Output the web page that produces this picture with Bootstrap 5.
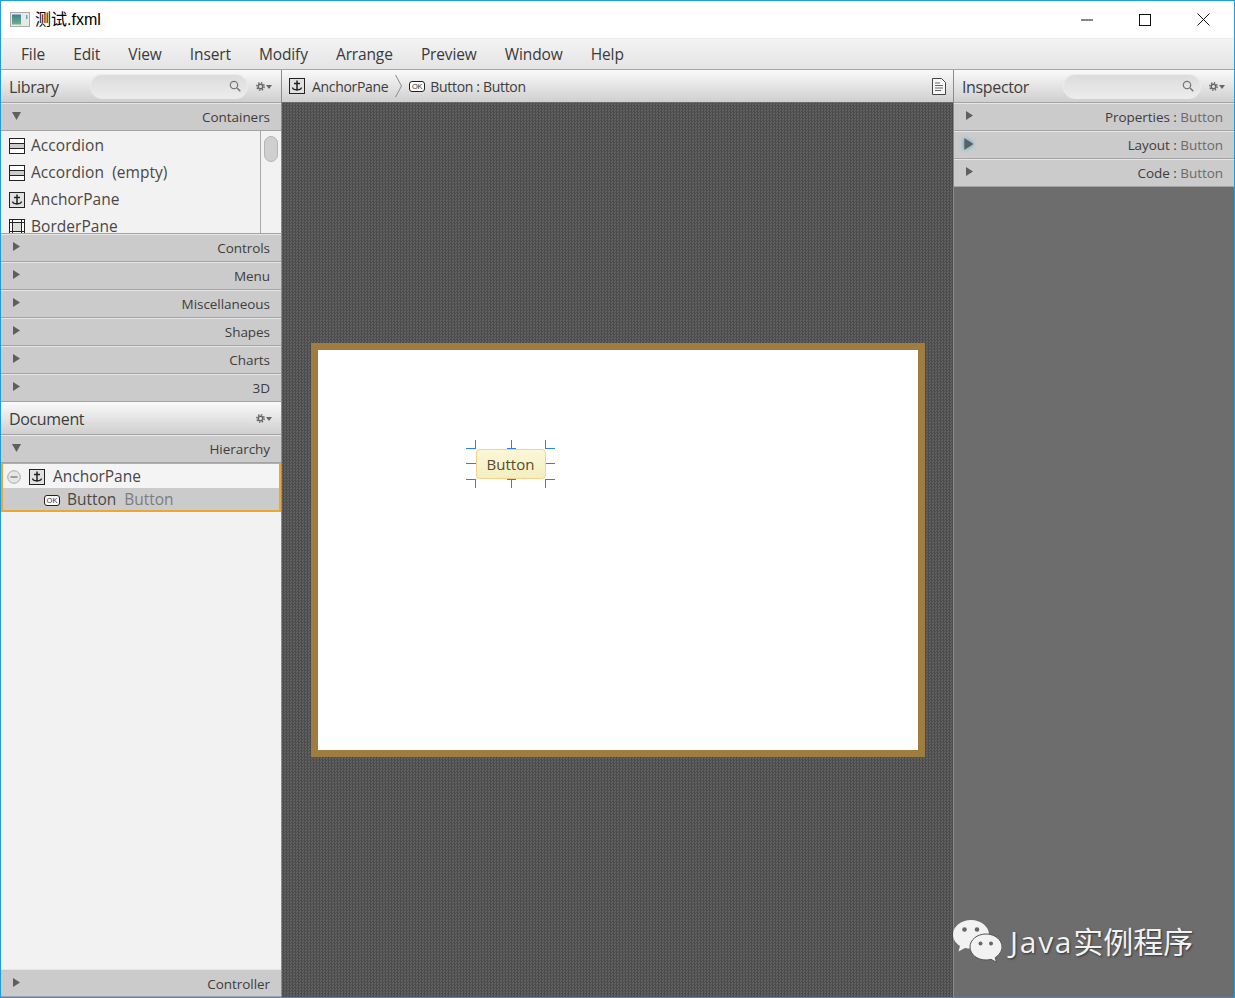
<!DOCTYPE html>
<html lang="en">
<head>
<meta charset="utf-8">
<title>测试.fxml</title>
<link href="https://cdn.jsdelivr.net/npm/bootstrap@5.3.0/dist/css/bootstrap.min.css" rel="stylesheet">
<style>
html,body{height:100%;margin:0;overflow:hidden}
body{font-family:"Open Sans","Noto Sans","Noto Sans CJK SC",sans-serif;color:#333;background:#fff}
.win{width:1235px;height:998px;border:1px solid #1c9ce2;display:flex;flex-direction:column}
.titlebar{height:37px;flex:none;background:#fff;color:#000;font-size:15px}
.titlebar .ttl{font-family:"Liberation Sans","Noto Sans CJK SC",sans-serif;font-size:16px;margin-left:5px}
.winbtns{margin-right:1px}
.winbtn{width:59px;height:37px;display:flex;align-items:center;justify-content:center}
.winbtn.first{padding-left:2px}
.menubar{height:32px;flex:none;background:linear-gradient(#f3f3f3,#e4e4e4);border-top:1px solid #ececec;border-bottom:1px solid #a6a6a6;font-size:15.5px;padding:2px 0 0 20px;gap:28.2px;color:#3a3a3a;letter-spacing:-.14px}
.mainrow{flex:1;min-height:0}
.lcol,.rcol{flex:none;display:flex;flex-direction:column;min-height:0}
.lcol{width:280px;background:#f2f2f2}
.rcol{width:280px;background:#6d6d6d}
.ccol{flex:1;min-width:0;border-left:1px solid #8c8c8c;border-right:1px solid #8c8c8c;display:flex;flex-direction:column}
.head{height:33px;flex:none;background:linear-gradient(#fafafa,#cfcfcf);border-bottom:1px solid #a3a3a3;padding:2px 8px 0;font-size:16px;color:#3d3d3d;letter-spacing:-.35px}
.searchbox{position:relative;width:158px;height:25px;border-radius:12px;background:linear-gradient(#dcdcdc,#ececec);border:1px solid #ececec;margin-left:auto;margin-top:-2px}
.searchbox.narrow{width:138px}
.searchbox svg{position:absolute;right:6px;top:5px}
.gear{margin-left:8px;margin-right:1px;margin-top:-2px}
.band{height:28px;flex:none;background:#cbcbcb;border-top:1px solid #e6e6e6;border-bottom:1px solid #a3a3a3;padding:0 11px 0 11px;font-size:13.5px;color:#3d3d3d;letter-spacing:-.05px;display:flex;align-items:center;justify-content:space-between}
.band .sub{color:#6a6a6a}
.tri{flex:none;margin-top:-3px}
.tri.rt{margin-left:1px}
.band.lastband{padding-top:2px}
.liblist{height:103px;flex:none;overflow:hidden;display:flex;background:#f2f2f2;border-bottom:1px solid #a3a3a3}
.libitems{flex:1;border-right:1px solid #a8a8a8;padding:1px 0 0 8px;overflow:hidden}
.libitem{height:27px;display:flex;align-items:center;gap:6px;font-size:15.5px;color:#484848;letter-spacing:.05px;white-space:pre}
.scrolltrack{width:20px;flex:none;padding:5px 3px 0 3px}
.scrollthumb{width:14px;height:26px;border-radius:7px;background:#cfcfcf;border:1px solid #b5b5b5}
.tree{height:49px;flex:none;border:2px solid #eca632;border-top-width:1px;display:flex;flex-direction:column;font-size:15.5px;color:#484848;letter-spacing:-.02px;overflow:hidden}
.treerow{display:flex;align-items:center;flex:none}
.treerow.r1{height:24px;padding:1px 0 0 4px;gap:8px;background:#f4f4f4}
.treerow.r2{height:22px;line-height:1;background:#cbcbcb;padding:2px 0 0 41px;gap:7px}
.treerow .dim{color:#7d7d7d;margin-left:1px}
.spacer{flex:1;background:#f2f2f2}
.crumbs{height:33px;flex:none;background:linear-gradient(#fafafa,#cfcfcf);border-bottom:1px solid #6a6a6a;padding:0 7px;font-size:14px;color:#3d3d3d;letter-spacing:-.32px}
.crumbs .t1{margin-left:7px}
.crumbs .chev{margin:0 7px}
.crumbs .t2{margin-left:5px}
.stage{flex:1;min-height:0;display:flex;align-items:center;justify-content:center;background-color:#565656;background-image:repeating-conic-gradient(#4c4c4c 0 25%,#606060 0 50%);background-size:3px 3px}
.sheet{position:relative;width:614px;height:414px;flex:none;background:#fff;border:7px solid #9f7c3f}
.fxbtn{position:absolute;left:158px;top:99px;width:70px;height:30px;border:1px solid #f5d18c;border-radius:4px;background:linear-gradient(#fbf7d7,#f3efc0);font-size:15px;color:#5b4a30;display:flex;align-items:center;justify-content:center;padding:0}
.handles{position:absolute;left:147px;top:88px}
.wm{position:absolute;left:952px;top:918px;display:flex;align-items:center;gap:6px;color:#f2f2f2;font-family:"Noto Sans CJK SC","Noto Sans",sans-serif;font-size:30px;text-shadow:1px 1px 2px #333;pointer-events:none}
.wm .jv{font-family:"Open Sans",sans-serif;letter-spacing:1.7px;margin-left:2px}
.wm .cn{font-size:30px}
</style>
</head>
<body>
<svg width="0" height="0" class="d-none">
  <defs>
    <symbol id="i-acc" viewBox="0 0 16 16"><rect x=".5" y=".5" width="15" height="15" fill="#fff" stroke="#222"/><rect x="1" y="5" width="14" height="6" fill="#ccc"/><path d="M1 5.500h14M1 10.500h14" stroke="#222"/></symbol>
    <symbol id="i-anc" viewBox="0 0 16 16"><rect x=".5" y=".5" width="15" height="15" fill="#e2e2e2" stroke="#222"/><path d="M8 2.500v10M5 5.500h6" fill="none" stroke="#222" stroke-width="1.500"/><path d="M3.500 9.500c.5 3 8.500 3 9 0" fill="none" stroke="#222" stroke-width="1.500"/></symbol>
    <symbol id="i-bp" viewBox="0 0 16 16"><rect x=".5" y=".5" width="15" height="15" fill="#fff" stroke="#222"/><rect x="3" y="3" width="10" height="10" fill="#ddd"/><path d="M.5 3.500h15M.5 12.500h15M3.500.5v15M12.500.5v15" stroke="#222"/></symbol>
    <symbol id="i-ok" viewBox="0 0 16 11"><rect x=".5" y=".5" width="15" height="10" rx="2.500" fill="#fff" stroke="#222"/><text x="8" y="8.200" text-anchor="middle" font-family="Liberation Sans,sans-serif" font-size="7.500" fill="#333">OK</text></symbol>
    <symbol id="i-gear" viewBox="0 0 16 9"><circle cx="4.500" cy="4.500" r="2.300" fill="none" stroke="#666" stroke-width="1.500"/><circle cx="4.500" cy="4.500" r="3.700" fill="none" stroke="#666" stroke-width="1.400" stroke-dasharray="1.450 1.450"/><path d="M10 3h6l-3 4z" fill="#666"/></symbol>
    <symbol id="i-search" viewBox="0 0 12 12"><circle cx="5" cy="5" r="3.700" fill="none" stroke="#777" stroke-width="1.200"/><path d="M8 8l3.300 3.300" stroke="#777" stroke-width="1.500"/></symbol>
    <symbol id="i-down" viewBox="0 0 9 8"><path d="M0 0h9L4.500 8z" fill="#5f5f5f"/></symbol>
    <symbol id="i-right" viewBox="0 0 8 9"><path d="M0 0l7 4.500L0 9z" fill="#5f5f5f"/></symbol>
  </defs>
</svg>
<div class="win">
  <div class="titlebar d-flex align-items-center">
    <svg width="20" height="15" viewBox="0 0 20 15" style="margin-left:9px"><rect x=".5" y=".5" width="19" height="14" fill="#e9e9e9" stroke="#aaa"/><defs><linearGradient id="tg" x1="0" y1="0" x2="0" y2="1"><stop offset="0" stop-color="#3e7f95"/><stop offset="1" stop-color="#6fb384"/></linearGradient></defs><rect x="2" y="2.500" width="9" height="10" fill="url(#tg)"/><rect x="16" y="3" width="1.500" height="4" fill="#6aa"/></svg>
    <span class="ttl">测试.fxml</span>
    <div class="winbtns d-flex ms-auto">
      <div class="winbtn first"><svg width="12" height="2" viewBox="0 0 12 2"><path d="M0 1h12" stroke="#111"/></svg></div>
      <div class="winbtn"><svg width="12" height="12" viewBox="0 0 12 12"><rect x=".5" y=".5" width="11" height="11" fill="none" stroke="#111"/></svg></div>
      <div class="winbtn"><svg width="13" height="13" viewBox="0 0 13 13"><path d="M.5.500l12 12M12.500.500l-12 12" stroke="#111"/></svg></div>
    </div>
  </div>
  <div class="menubar d-flex align-items-center">
    <span>File</span><span>Edit</span><span>View</span><span>Insert</span><span>Modify</span><span>Arrange</span><span>Preview</span><span>Window</span><span>Help</span>
  </div>
  <div class="mainrow d-flex">
    <div class="lcol">
      <div class="head d-flex align-items-center">
        <span>Library</span>
        <div class="searchbox"><svg width="12" height="12"><use href="#i-search"/></svg></div>
        <svg class="gear" width="16" height="9"><use href="#i-gear"/></svg>
      </div>
      <div class="band"><svg class="tri" width="9" height="8"><use href="#i-down"/></svg><span>Containers</span></div>
      <div class="liblist">
        <div class="libitems">
          <div class="libitem"><svg width="16" height="16"><use href="#i-acc"/></svg><span>Accordion</span></div>
          <div class="libitem"><svg width="16" height="16"><use href="#i-acc"/></svg><span>Accordion  (empty)</span></div>
          <div class="libitem"><svg width="16" height="16"><use href="#i-anc"/></svg><span>AnchorPane</span></div>
          <div class="libitem"><svg width="16" height="16"><use href="#i-bp"/></svg><span>BorderPane</span></div>
        </div>
        <div class="scrolltrack"><div class="scrollthumb"></div></div>
      </div>
      <div class="band"><svg class="tri rt" width="8" height="9"><use href="#i-right"/></svg><span>Controls</span></div>
      <div class="band"><svg class="tri rt" width="8" height="9"><use href="#i-right"/></svg><span>Menu</span></div>
      <div class="band"><svg class="tri rt" width="8" height="9"><use href="#i-right"/></svg><span>Miscellaneous</span></div>
      <div class="band"><svg class="tri rt" width="8" height="9"><use href="#i-right"/></svg><span>Shapes</span></div>
      <div class="band"><svg class="tri rt" width="8" height="9"><use href="#i-right"/></svg><span>Charts</span></div>
      <div class="band"><svg class="tri rt" width="8" height="9"><use href="#i-right"/></svg><span>3D</span></div>
      <div class="head d-flex align-items-center justify-content-between">
        <span>Document</span>
        <svg class="gear" width="16" height="9"><use href="#i-gear"/></svg>
      </div>
      <div class="band"><svg class="tri" width="9" height="8"><use href="#i-down"/></svg><span>Hierarchy</span></div>
      <div class="tree">
        <div class="treerow r1">
          <svg width="14" height="14" viewBox="0 0 14 14"><circle cx="7" cy="7" r="6.300" fill="#e6e6e6" stroke="#aaa"/><path d="M3.500 7h7" stroke="#777" stroke-width="1.300"/></svg>
          <svg width="16" height="16"><use href="#i-anc"/></svg><span>AnchorPane</span>
        </div>
        <div class="treerow r2"><svg width="16" height="11"><use href="#i-ok"/></svg><span>Button</span><span class="dim">Button</span></div>
      </div>
      <div class="spacer"></div>
      <div class="band lastband"><svg class="tri rt" width="8" height="9"><use href="#i-right"/></svg><span>Controller</span></div>
    </div>
    <div class="ccol">
      <div class="crumbs d-flex align-items-center">
        <svg width="16" height="16"><use href="#i-anc"/></svg>
        <span class="t1">AnchorPane</span>
        <svg class="chev" width="7" height="24" viewBox="0 0 7 24"><path d="M.5 1l6 11-6 11" fill="none" stroke="#8a8a8a"/></svg>
        <svg width="16" height="11"><use href="#i-ok"/></svg>
        <span class="t2">Button : Button</span>
        <svg class="ms-auto" width="14" height="17" viewBox="0 0 14 17"><path d="M.5.500h9l4 4v12H.5z" fill="#f6f6f6" stroke="#444"/><path d="M3 5h5M3 7.500h8M3 10h8M3 12.500h6" stroke="#666"/></svg>
      </div>
      <div class="stage">
        <div class="sheet">
          <svg class="handles" width="92" height="52" viewBox="0 0 92 52">
            <path d="M10.500 2v9M1 10.500h9M46.500 2v8M42 10.500h9M80.500 2v9M81 10.500h9M1 25.500h10M81 25.500h9M10.500 41v9M1 41.500h9M46.500 42v8M42 41.500h9M80.500 41v9M81 41.500h9" fill="none" stroke="#2f7fea" stroke-width="1"/>
          </svg>
          <button type="button" class="fxbtn">Button</button>
        </div>
      </div>
    </div>
    <div class="rcol">
      <div class="head d-flex align-items-center">
        <span>Inspector</span>
        <div class="searchbox narrow"><svg width="12" height="12"><use href="#i-search"/></svg></div>
        <svg class="gear" width="16" height="9"><use href="#i-gear"/></svg>
      </div>
      <div class="band"><svg class="tri rt" width="8" height="9"><use href="#i-right"/></svg><span>Properties : <span class="sub">Button</span></span></div>
      <div class="band"><svg class="tri" width="11" height="12" viewBox="0 0 8 9" style="margin-left:-1px;filter:drop-shadow(0 0 2px #27a9e0)"><use href="#i-right"/></svg><span>Layout : <span class="sub">Button</span></span></div>
      <div class="band"><svg class="tri rt" width="8" height="9"><use href="#i-right"/></svg><span>Code : <span class="sub">Button</span></span></div>
    </div>
  </div>
</div>
<div class="wm">
  <svg width="50" height="44" viewBox="0 0 50 44">
    <path d="M19 1C9 1 1 7.500 1 15.500c0 5 3 9 7 11.500l-1.500 5.500 6.500-3.500c2 .5 4 .8 6 .8C29 29.800 37 23.400 37 15.500 37 7.500 29 1 19 1z" fill="#f2f2f2"/>
    <circle cx="12.500" cy="10.500" r="2.300" fill="#666"/><circle cx="25" cy="10.500" r="2.300" fill="#666"/>
    <path d="M34 15c-9 0-16 5.800-16 13s7 13 16 13c1.800 0 3.500-.2 5-.7l5.500 3-1.300-4.700C47 36.100 50 32.300 50 28c0-7.200-7-13-16-13z" fill="#f2f2f2" stroke="#555" stroke-width="1"/>
    <circle cx="28.500" cy="24.500" r="2" fill="#666"/><circle cx="39" cy="24.500" r="2" fill="#666"/>
  </svg>
  <span><span class="jv">Java</span><span class="cn">实例程序</span></span>
</div>
</body>
</html>
